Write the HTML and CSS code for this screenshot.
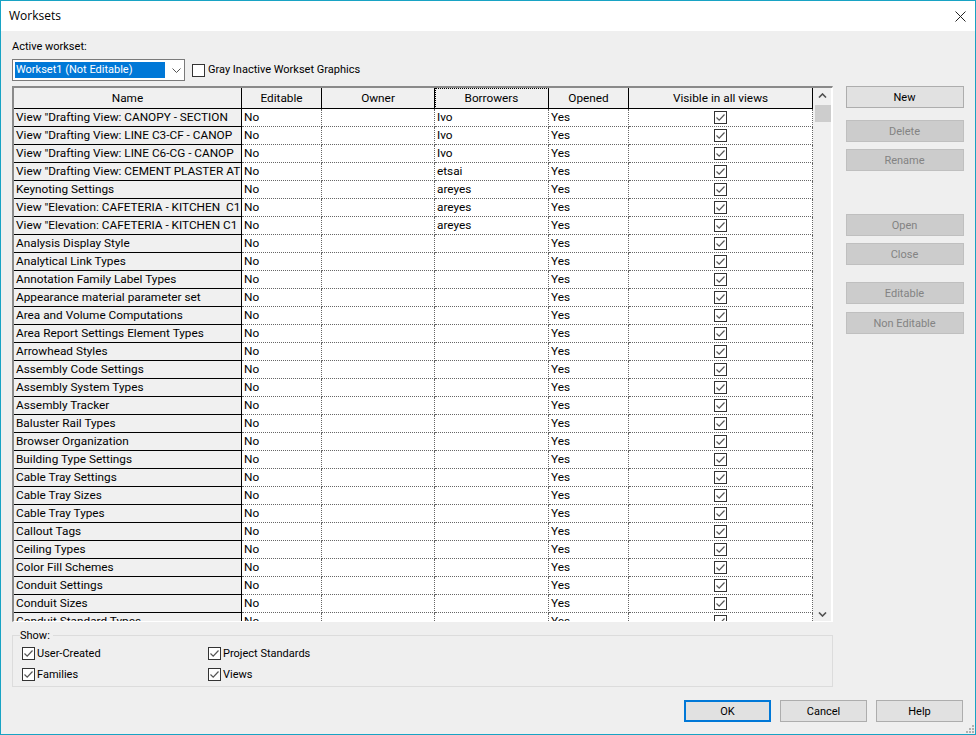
FILE: index.html
```html
<!DOCTYPE html>
<html lang="en">
<head>
<meta charset="utf-8">
<title>Worksets</title>
<link rel="stylesheet" href="styles.css">
</head>
<body>
<svg class="defs" width="0" height="0" aria-hidden="true"><symbol id="chk" viewBox="0 0 13 13"><rect x=".5" y=".5" width="12" height="12" fill="#fff" stroke="#333"/><path d="M2.5 6.5 5.2 9.2 10.5 3.5" fill="none" stroke="#555" stroke-width="1.2"/></symbol></svg>
<div class="dialog">
  <header class="titlebar">
    <span class="title">Worksets</span>
    <svg class="close" width="11" height="11" viewBox="0 0 11 11"><path d="M.5.5l10 10M10.5.5l-10 10" stroke="#222" fill="none"/></svg>
  </header>
  <div class="content">
    <div class="active-label">Active workset:</div>
    <div class="active-row">
      <div class="combo">
        <span class="combo-sel">Workset1 (Not Editable)</span>
        <svg class="combo-arrow" width="9" height="5" viewBox="0 0 9 5"><path d="M.5.5l4 4 4-4" fill="none" stroke="#555"/></svg>
      </div>
      <label class="check gray-check"><span class="empty-box"></span>Gray Inactive Workset Graphics</label>
    </div>
    <div class="main">
      <div class="frame">
        <div class="scroller">
          <table class="grid">
            <colgroup><col class="c-name"><col class="c-edit"><col class="c-owner"><col class="c-borrow"><col class="c-open"><col class="c-vis"></colgroup>
            <thead><tr><th>Name</th><th>Editable</th><th>Owner</th><th class="focus">Borrowers</th><th>Opened</th><th>Visible in all views</th></tr></thead>
            <tbody>
              <tr><th>View "Drafting View: CANOPY - SECTION</th><td>No</td><td></td><td>Ivo</td><td>Yes</td><td class="v"><svg class="cb"><use href="#chk"/></svg></td></tr>
              <tr><th>View "Drafting View: LINE C3-CF - CANOP</th><td>No</td><td></td><td>Ivo</td><td>Yes</td><td class="v"><svg class="cb"><use href="#chk"/></svg></td></tr>
              <tr><th>View "Drafting View: LINE C6-CG - CANOP</th><td>No</td><td></td><td>Ivo</td><td>Yes</td><td class="v"><svg class="cb"><use href="#chk"/></svg></td></tr>
              <tr><th>View "Drafting View: CEMENT PLASTER AT</th><td>No</td><td></td><td>etsai</td><td>Yes</td><td class="v"><svg class="cb"><use href="#chk"/></svg></td></tr>
              <tr><th>Keynoting Settings</th><td>No</td><td></td><td>areyes</td><td>Yes</td><td class="v"><svg class="cb"><use href="#chk"/></svg></td></tr>
              <tr><th>View "Elevation: CAFETERIA - KITCHEN&nbsp; C1</th><td>No</td><td></td><td>areyes</td><td>Yes</td><td class="v"><svg class="cb"><use href="#chk"/></svg></td></tr>
              <tr><th>View "Elevation: CAFETERIA - KITCHEN C1</th><td>No</td><td></td><td>areyes</td><td>Yes</td><td class="v"><svg class="cb"><use href="#chk"/></svg></td></tr>
              <tr><th>Analysis Display Style</th><td>No</td><td></td><td></td><td>Yes</td><td class="v"><svg class="cb"><use href="#chk"/></svg></td></tr>
              <tr><th>Analytical Link Types</th><td>No</td><td></td><td></td><td>Yes</td><td class="v"><svg class="cb"><use href="#chk"/></svg></td></tr>
              <tr><th>Annotation Family Label Types</th><td>No</td><td></td><td></td><td>Yes</td><td class="v"><svg class="cb"><use href="#chk"/></svg></td></tr>
              <tr><th>Appearance material parameter set</th><td>No</td><td></td><td></td><td>Yes</td><td class="v"><svg class="cb"><use href="#chk"/></svg></td></tr>
              <tr><th>Area and Volume Computations</th><td>No</td><td></td><td></td><td>Yes</td><td class="v"><svg class="cb"><use href="#chk"/></svg></td></tr>
              <tr><th>Area Report Settings Element Types</th><td>No</td><td></td><td></td><td>Yes</td><td class="v"><svg class="cb"><use href="#chk"/></svg></td></tr>
              <tr><th>Arrowhead Styles</th><td>No</td><td></td><td></td><td>Yes</td><td class="v"><svg class="cb"><use href="#chk"/></svg></td></tr>
              <tr><th>Assembly Code Settings</th><td>No</td><td></td><td></td><td>Yes</td><td class="v"><svg class="cb"><use href="#chk"/></svg></td></tr>
              <tr><th>Assembly System Types</th><td>No</td><td></td><td></td><td>Yes</td><td class="v"><svg class="cb"><use href="#chk"/></svg></td></tr>
              <tr><th>Assembly Tracker</th><td>No</td><td></td><td></td><td>Yes</td><td class="v"><svg class="cb"><use href="#chk"/></svg></td></tr>
              <tr><th>Baluster Rail Types</th><td>No</td><td></td><td></td><td>Yes</td><td class="v"><svg class="cb"><use href="#chk"/></svg></td></tr>
              <tr><th>Browser Organization</th><td>No</td><td></td><td></td><td>Yes</td><td class="v"><svg class="cb"><use href="#chk"/></svg></td></tr>
              <tr><th>Building Type Settings</th><td>No</td><td></td><td></td><td>Yes</td><td class="v"><svg class="cb"><use href="#chk"/></svg></td></tr>
              <tr><th>Cable Tray Settings</th><td>No</td><td></td><td></td><td>Yes</td><td class="v"><svg class="cb"><use href="#chk"/></svg></td></tr>
              <tr><th>Cable Tray Sizes</th><td>No</td><td></td><td></td><td>Yes</td><td class="v"><svg class="cb"><use href="#chk"/></svg></td></tr>
              <tr><th>Cable Tray Types</th><td>No</td><td></td><td></td><td>Yes</td><td class="v"><svg class="cb"><use href="#chk"/></svg></td></tr>
              <tr><th>Callout Tags</th><td>No</td><td></td><td></td><td>Yes</td><td class="v"><svg class="cb"><use href="#chk"/></svg></td></tr>
              <tr><th>Ceiling Types</th><td>No</td><td></td><td></td><td>Yes</td><td class="v"><svg class="cb"><use href="#chk"/></svg></td></tr>
              <tr><th>Color Fill Schemes</th><td>No</td><td></td><td></td><td>Yes</td><td class="v"><svg class="cb"><use href="#chk"/></svg></td></tr>
              <tr><th>Conduit Settings</th><td>No</td><td></td><td></td><td>Yes</td><td class="v"><svg class="cb"><use href="#chk"/></svg></td></tr>
              <tr><th>Conduit Sizes</th><td>No</td><td></td><td></td><td>Yes</td><td class="v"><svg class="cb"><use href="#chk"/></svg></td></tr>
              <tr><th>Conduit Standard Types</th><td>No</td><td></td><td></td><td>Yes</td><td class="v"><svg class="cb"><use href="#chk"/></svg></td></tr>
            </tbody>
          </table>
        </div>
        <div class="scrollbar">
          <svg width="9" height="5" viewBox="0 0 9 5"><path d="M1 4.5l3.5-3.5 3.5 3.5" fill="none" stroke="#505050" stroke-width="1.6"/></svg>
          <div class="thumb"></div>
          <div class="track"></div>
          <svg width="9" height="5" viewBox="0 0 9 5"><path d="M1 .5l3.5 3.5 3.5-3.5" fill="none" stroke="#505050" stroke-width="1.6"/></svg>
        </div>
      </div>
      <div class="side">
        <button class="btn">New</button>
        <button class="btn off g1">Delete</button>
        <button class="btn off g2">Rename</button>
        <button class="btn off g3">Open</button>
        <button class="btn off g2">Close</button>
        <button class="btn off g4">Editable</button>
        <button class="btn off g5">Non Editable</button>
      </div>
    </div>
    <fieldset class="show">
      <legend>Show:</legend>
      <div class="show-grid">
        <label class="check"><svg class="cb"><use href="#chk"/></svg>User-Created</label>
        <label class="check"><svg class="cb"><use href="#chk"/></svg>Project Standards</label>
        <label class="check"><svg class="cb"><use href="#chk"/></svg>Families</label>
        <label class="check"><svg class="cb"><use href="#chk"/></svg>Views</label>
      </div>
    </fieldset>
    <footer class="footer">
      <button class="btn wide default">OK</button>
      <button class="btn wide">Cancel</button>
      <button class="btn wide">Help</button>
    </footer>
  </div>
  <svg class="grip" width="10" height="10" viewBox="0 0 10 10" fill="#b0b0b0"><rect x="7" y="1" width="2" height="2"/><rect x="4" y="4" width="2" height="2"/><rect x="7" y="4" width="2" height="2"/><rect x="1" y="7" width="2" height="2"/><rect x="4" y="7" width="2" height="2"/><rect x="7" y="7" width="2" height="2"/></svg>
</div>
</body>
</html>
```
FILE: styles.css
```css
* { box-sizing: border-box; }
html, body { margin: 0; padding: 0; }
body { font: 11px/14px Roboto, Tahoma, sans-serif; color: #000; background: #efefef; }
.defs { position: absolute; }
.dialog { position: relative; width: 976px; height: 735px; display: flex; flex-direction: column; border: 1px solid #18a3c4; background: #efefef; overflow: hidden; }
.titlebar { height: 30px; flex: none; background: #fff; display: flex; align-items: center; justify-content: space-between; padding: 0 9px 0 8px; }
.title { font: 12px/16px "Open Sans", sans-serif; }
.content { flex: 1; padding: 9px 11px 0; display: flex; flex-direction: column; min-height: 0; }
.active-label { height: 14px; line-height: 14px; }
.active-row { display: flex; align-items: center; margin-top: 5px; height: 22px; }
.combo { width: 173px; height: 22px; border: 1px solid #7a7a7a; background: #fff; padding: 2px; display: flex; align-items: center; justify-content: space-between; }
.combo-sel { width: 150px; height: 16px; line-height: 15px; background: #0078d7; color: #fff; padding-left: 1px; white-space: nowrap; }
.combo-arrow { margin-right: 1px; }
.check { display: flex; align-items: center; white-space: nowrap; }
.gray-check { margin-left: 7px; }
.empty-box { width: 13px; height: 13px; border: 1px solid #333; background: #fff; margin-right: 3px; flex: none; }
.main { display: flex; margin-top: 5px; }
.frame { width: 821px; height: 536px; flex: none; display: flex; border: 1px solid #fff; border-top: 2px solid #8a8a8a; border-left: 2px solid #8a8a8a; background: #fff; }
.scroller { width: 799px; flex: none; height: 100%; overflow: hidden; }
.grid { table-layout: fixed; width: 799px; border-collapse: separate; border-spacing: 0; font-size: 11.8px; }
.c-name { width: 228px; } .c-edit { width: 80px; } .c-owner { width: 113px; } .c-borrow { width: 114px; } .c-open { width: 80px; } .c-vis { width: 184px; }
.grid thead th { height: 21px; padding: 0; font-weight: 400; text-align: center; background: #f0f0f0; border-right: 1px solid #000; border-bottom: 1px solid #000; }
.grid thead th.focus { outline: 1px dotted #000; outline-offset: -1px; }
.grid tbody th { height: 18px; padding: 0 0 2px 2px; font-weight: 400; text-align: left; background: #f0f0f0; border-right: 1px solid #000; border-bottom: 1px solid #000; white-space: nowrap; overflow: hidden; }
.grid td { height: 18px; padding: 0 0 2px 2px; border-right: 1px dotted #666; border-bottom: 1px dotted #666; white-space: nowrap; background: #fff; }
.grid td.v { text-align: center; padding: 0; line-height: 0; }
.cb { width: 13px; height: 13px; flex: none; vertical-align: middle; }
.check .cb { margin-right: 2px; }
.scrollbar { width: 18px; flex: none; background: #f0f0f0; display: flex; flex-direction: column; align-items: center; padding: 5px 0 4px 1px; }
.thumb { width: 16px; height: 17px; background: #cdcdcd; margin-top: 7px; }
.track { flex: 1; }
.side { margin-left: 13px; width: 118px; display: flex; flex-direction: column; }
.btn { width: 118px; height: 22px; flex: none; padding: 2px 1px 0 0; font: inherit; color: #000; background: #e1e1e1; border: 1px solid #adadad; }
.btn.off { background: #ccc; border-color: #bfbfbf; color: #838383; }
.g1 { margin-top: 12px; } .g2 { margin-top: 7px; } .g3 { margin-top: 43px; } .g4 { margin-top: 17px; } .g5 { margin-top: 8px; }
.show { margin: 6px 0 0; padding: 0 0 0 9px; width: 821px; height: 59px; border: 1px solid #dcdcdc; }
.show legend { padding: 0 3px 0 0; margin-left: -2px; line-height: 16px; height: 14px; }
.show-grid { display: grid; grid-template-columns: 186px 1fr; grid-auto-rows: 21px; margin-top: 1px; align-items: center; }
.footer { display: flex; justify-content: flex-end; gap: 9px; margin-top: 13px; padding-right: 1px; }
.btn.wide { width: 87px; padding: 2px 0 0; }
.btn.default { border: 2px solid #0078d7; }
.grip { position: absolute; right: 0; bottom: 0; }
```
